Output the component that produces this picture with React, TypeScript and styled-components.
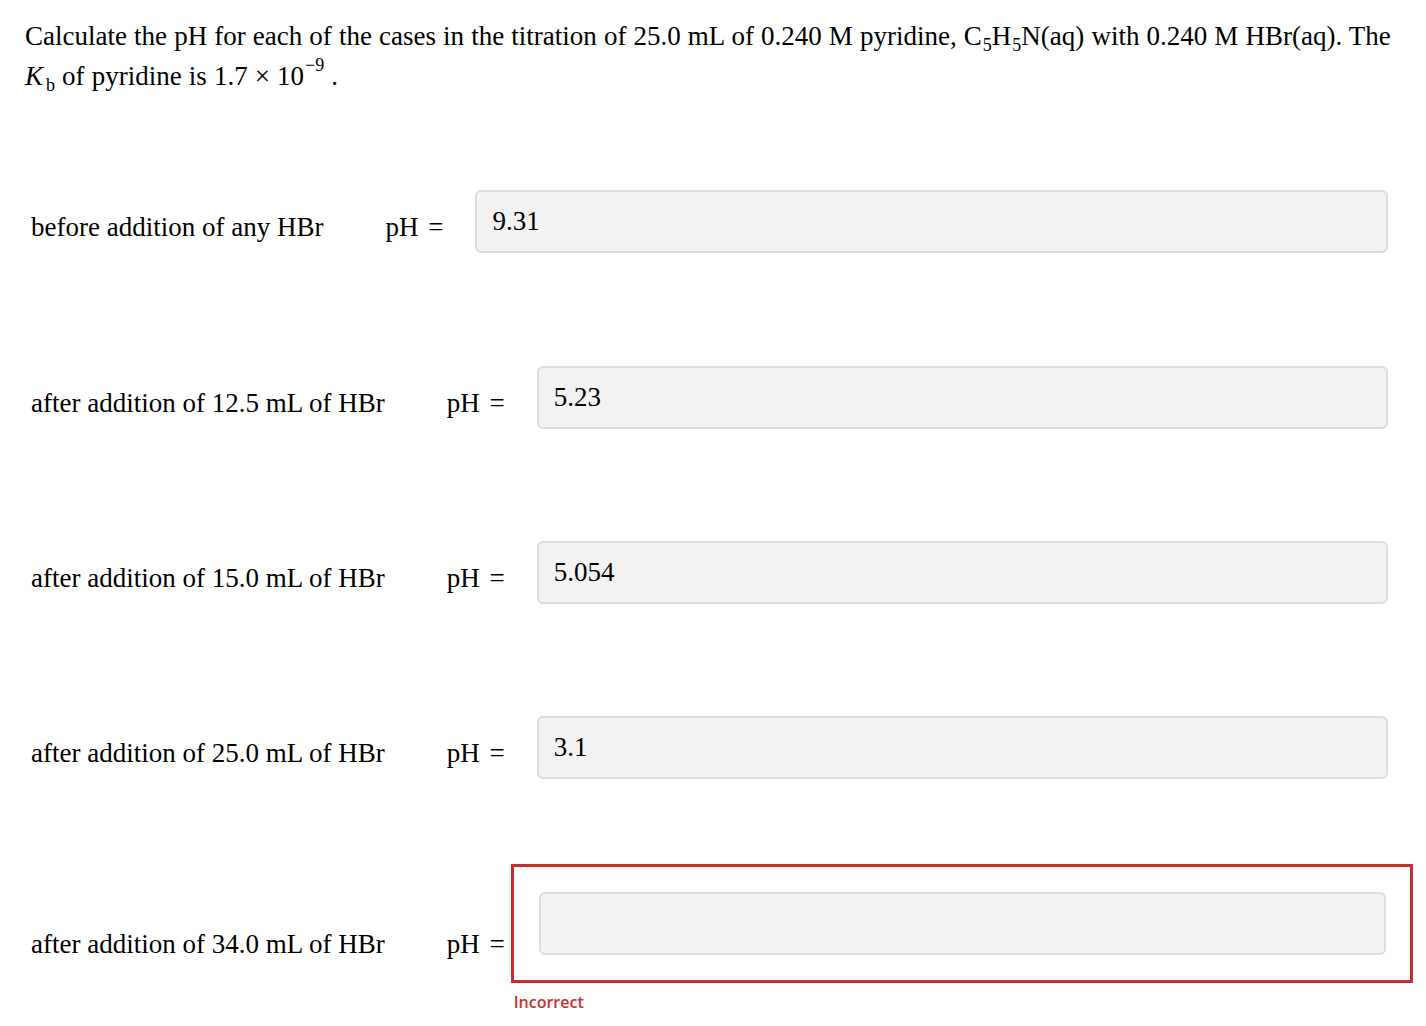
import React from "react";
import styled, { createGlobalStyle } from "styled-components";

const Global = createGlobalStyle`
  html, body { margin: 0; padding: 0; background: #ffffff; }
  body { font-family: "Liberation Serif", "Times New Roman", serif; color: #000; }
`;

const Page = styled.div`
  padding: 16px 13px 0 25px;
  width: 1426px;
  box-sizing: border-box;
`;

const Question = styled.p`
  margin: 0;
  font-size: 27px;
  line-height: 40px;
  word-spacing: 0.35px;
`;

const Sub = styled.sub`
  font-size: 18px;
  line-height: 0;
  vertical-align: -6px;
  margin-left: 1px;
`;

const Sup = styled.sup`
  font-size: 18px;
  line-height: 0;
  vertical-align: 14px;
  margin-left: 1px;
`;

const Italic = styled.i`
  font-style: italic;
  margin-right: 2px;
`;

const Rows = styled.div`
  display: flex;
  flex-direction: column;
  padding-top: 94px;
  padding-left: 6px;
`;

const Row = styled.div<{ $gap: number }>`
  display: flex;
  align-items: center;
  margin-top: ${(p) => p.$gap}px;
  font-size: 27px;
`;

const Label = styled.span`
  white-space: nowrap;
  padding-top: 10px;
  line-height: 30px;
`;

const Equals = styled.span`
  white-space: nowrap;
  margin-left: 62px;
  padding-top: 10px;
  line-height: 30px;
  word-spacing: 3px;
`;

const Slot = styled.div`
  flex: 1;
  display: flex;
  flex-direction: column;
  padding: 0 25px 0 32px;
`;

const ErrorSlot = styled.div`
  flex: 1;
  display: flex;
  flex-direction: column;
  margin-left: 6px;
`;

const ErrorFrame = styled.div`
  border: 3px solid #c3302e;
  padding: 25px 24px 25px 25px;
`;

const Feedback = styled.div`
  font-family: "Open Sans", "Noto Sans", sans-serif;
  font-weight: 600;
  font-size: 16px;
  color: #c3302e;
  padding: 7px 0 0 3px;
  line-height: 24px;
`;

const Field = styled.input`
  display: block;
  width: 100%;
  box-sizing: border-box;
  height: 63px;
  margin: 0;
  padding: 0 15px;
  border: 2px solid #dcdcdc;
  border-radius: 6px;
  background: #f2f2f2;
  font-family: "Liberation Serif", "Times New Roman", serif;
  font-size: 27px;
  color: #000;
  outline: none;
`;

const rows = [
  { label: "before addition of any HBr", value: "9.31", gap: 0 },
  { label: "after addition of 12.5 mL of HBr", value: "5.23", gap: 113 },
  { label: "after addition of 15.0 mL of HBr", value: "5.054", gap: 112 },
  { label: "after addition of 25.0 mL of HBr", value: "3.1", gap: 112 },
];

export default function App() {
  return (
    <Page>
      <Global />
      <Question>
        Calculate the pH for each of the cases in the titration of 25.0 mL of
        0.240 M pyridine, C<Sub>5</Sub>H<Sub>5</Sub>N(aq) with 0.240 M HBr(aq).
        The <Italic>K</Italic>
        <Sub>b</Sub> of pyridine is 1.7 × 10<Sup>−9</Sup> .
      </Question>
      <Rows>
        {rows.map((r) => (
          <Row key={r.label} $gap={r.gap}>
            <Label>{r.label}</Label>
            <Equals>pH =</Equals>
            <Slot>
              <Field readOnly defaultValue={r.value} />
            </Slot>
          </Row>
        ))}
        <Row $gap={85}>
          <Label>after addition of 34.0 mL of HBr</Label>
          <Equals>pH =</Equals>
          <ErrorSlot>
            <ErrorFrame>
              <Field readOnly defaultValue="" />
            </ErrorFrame>
            <Feedback>Incorrect</Feedback>
          </ErrorSlot>
        </Row>
      </Rows>
    </Page>
  );
}
